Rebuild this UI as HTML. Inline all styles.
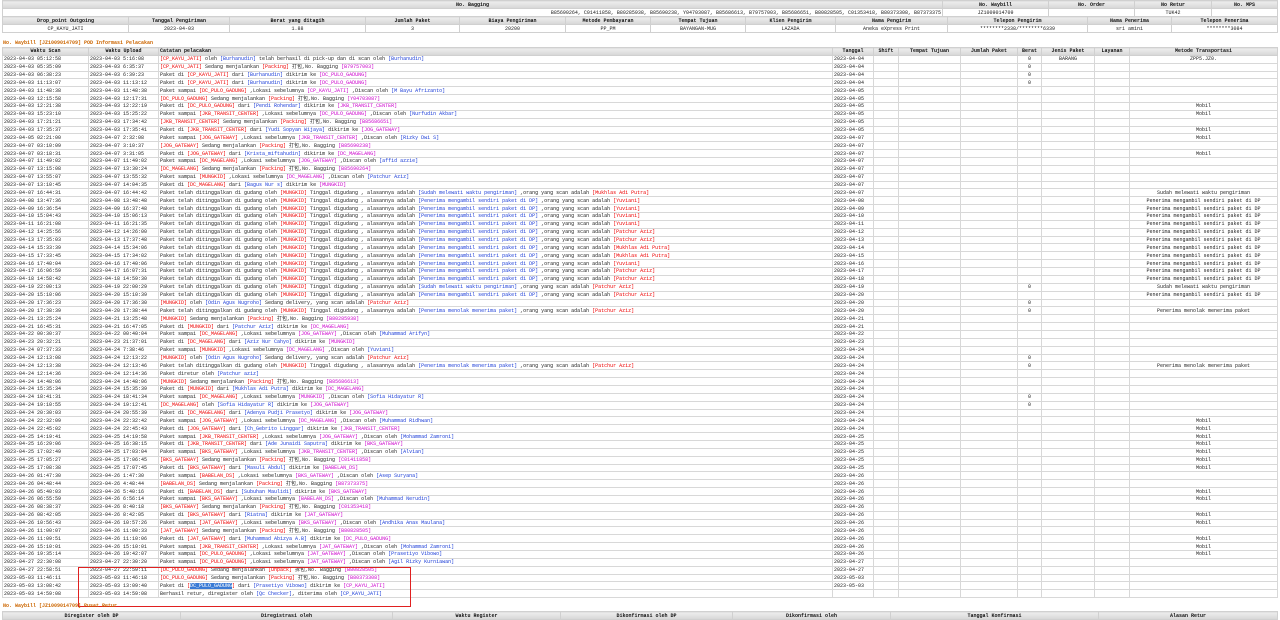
<!DOCTYPE html>
<html><head><meta charset="utf-8"><style>
*{box-sizing:border-box;margin:0;padding:0}
body{width:1280px;height:619px;overflow:hidden;background:#fff;font-family:"Liberation Mono","Noto Sans CJK SC",monospace;font-size:5px;color:#222}
table{border-collapse:collapse;table-layout:fixed;position:absolute;left:2px;width:1276px}
td,th{border:1px solid #d0d0d0;white-space:nowrap;overflow:hidden;padding:0 1px;line-height:6px}
th{background:linear-gradient(#eee,#d6d6d6);font-weight:bold;color:#111;text-align:center}
.c{text-align:center}
.r{color:#e00}.b{color:#1a3cd8}.m{color:#c0c}
.t{position:absolute;left:3px;color:#c60;font-weight:bold;font-size:5px}
#tr tr{height:7.86px}
#tr td{border-color:#d8d8d8}
.sel{background:#3a7bd5;color:#fff}
</style></head><body>
<table style="top:0"><colgroup><col style="width:940px"><col style="width:106px"><col style="width:86px"><col style="width:77px"><col></colgroup>
<tr style="height:8px"><th>No. Bagging</th><th>No. Waybill</th><th>No. Order</th><th>No Retur</th><th>No. MPS</th></tr>
<tr style="height:8px"><td style="text-align:right">B85690264, C01411858, B80285938, B85690238, Y04703087, B85686613, B79757003, B85686651, B80828505, C01353418, B80373308, B87373375</td><td class="c">JZ1009014709</td><td></td><td class="c">TUK42</td><td></td></tr></table>
<table style="top:16px"><colgroup><col style="width:126px"><col style="width:101px"><col style="width:136px"><col style="width:94px"><col style="width:106px"><col style="width:85px"><col style="width:95px"><col style="width:90px"><col style="width:112px"><col style="width:140px"><col style="width:84px"><col></colgroup>
<tr style="height:8px"><th>Drop_point Outgoing</th><th>Tanggal Pengiriman</th><th>Berat yang ditagih</th><th>Jumlah Paket</th><th>Biaya Pengiriman</th><th>Metode Pembayaran</th><th>Tempat Tujuan</th><th>Klien Pengirim</th><th>Nama Pengirim</th><th>Telepon Pengirim</th><th>Nama Penerima</th><th>Telepon Penerima</th></tr>
<tr style="height:8px" class="c"><td>CP_KAYU_JATI</td><td>2023-04-03</td><td>1.88</td><td>3</td><td>20200</td><td>PP_PM</td><td>BAYANGAN-MUG</td><td>LAZADA</td><td>Aneka eXpress Print</td><td>********2338/********6339</td><td>sri amini</td><td>********3084</td></tr></table>
<div class="t" style="top:40px">No. Waybill [JZ1009014709] POD Informasi Pelacakan</div>
<table id="tr" style="top:47px"><colgroup><col style="width:86px"><col style="width:70px"><col style="width:674px"><col style="width:41px"><col style="width:25px"><col style="width:62px"><col style="width:57px"><col style="width:24px"><col style="width:53px"><col style="width:35px"><col></colgroup>
<tr><th>Waktu Scan</th><th>Waktu Upload</th><th style="text-align:left">Catatan pelacakan</th><th>Tanggal</th><th>Shift</th><th>Tempat Tujuan</th><th>Jumlah Paket</th><th>Berat</th><th>Jenis Paket</th><th>Layanan</th><th>Metode Transportasi</th></tr>
<tr><td>2023-04-03 05:12:58</td><td>2023-04-03 5:16:08</td><td><span class="r">[CP_KAYU_JATI]</span> oleh <span class="b">[Burhanudin]</span> telah berhasil di pick-up dan di scan oleh <span class="b">[Burhanudin]</span></td><td>2023-04-04</td><td></td><td></td><td></td><td class="c">0</td><td class="c">BARANG</td><td></td><td class="c">ZPP5.JZ0.</td></tr>
<tr><td>2023-04-03 05:35:09</td><td>2023-04-03 6:35:37</td><td><span class="r">[CP_KAYU_JATI]</span> Sedang menjalankan <span class="r">[Packing]</span> 打包,No. Bagging <span class="m">[B79757003]</span></td><td>2023-04-04</td><td></td><td></td><td></td><td class="c">0</td><td></td><td></td><td></td></tr>
<tr><td>2023-04-03 06:38:23</td><td>2023-04-03 6:39:23</td><td>Paket di <span class="r">[CP_KAYU_JATI]</span> dari <span class="b">[Burhanudin]</span> dikirim ke <span class="m">[DC_PULO_GADUNG]</span></td><td>2023-04-04</td><td></td><td></td><td></td><td class="c">0</td><td></td><td></td><td></td></tr>
<tr><td>2023-04-03 11:13:07</td><td>2023-04-03 11:13:12</td><td>Paket di <span class="r">[CP_KAYU_JATI]</span> dari <span class="b">[Burhanudin]</span> dikirim ke <span class="m">[DC_PULO_GADUNG]</span></td><td>2023-04-04</td><td></td><td></td><td></td><td class="c">0</td><td></td><td></td><td></td></tr>
<tr><td>2023-04-03 11:48:38</td><td>2023-04-03 11:48:38</td><td>Paket sampai <span class="r">[DC_PULO_GADUNG]</span> ,Lokasi sebelumnya <span class="m">[CP_KAYU_JATI]</span> ,Discan oleh <span class="b">[M Bayu Afrizanto]</span></td><td>2023-04-05</td><td></td><td></td><td></td><td></td><td></td><td></td><td></td></tr>
<tr><td>2023-04-03 12:15:58</td><td>2023-04-03 12:17:31</td><td><span class="r">[DC_PULO_GADUNG]</span> Sedang menjalankan <span class="r">[Packing]</span> 打包,No. Bagging <span class="m">[Y04703087]</span></td><td>2023-04-05</td><td></td><td></td><td></td><td></td><td></td><td></td><td></td></tr>
<tr><td>2023-04-03 12:21:38</td><td>2023-04-03 12:22:19</td><td>Paket di <span class="r">[DC_PULO_GADUNG]</span> dari <span class="b">[Pendi Rohendar]</span> dikirim ke <span class="m">[JKB_TRANSIT_CENTER]</span></td><td>2023-04-05</td><td></td><td></td><td></td><td></td><td></td><td></td><td class="c">Mobil</td></tr>
<tr><td>2023-04-03 15:23:10</td><td>2023-04-03 15:25:22</td><td>Paket sampai <span class="r">[JKB_TRANSIT_CENTER]</span> ,Lokasi sebelumnya <span class="m">[DC_PULO_GADUNG]</span> ,Discan oleh <span class="b">[Nurfudin Akbar]</span></td><td>2023-04-05</td><td></td><td></td><td></td><td></td><td></td><td></td><td class="c">Mobil</td></tr>
<tr><td>2023-04-03 17:21:21</td><td>2023-04-03 17:34:42</td><td><span class="r">[JKB_TRANSIT_CENTER]</span> Sedang menjalankan <span class="r">[Packing]</span> 打包,No. Bagging <span class="m">[B85686651]</span></td><td>2023-04-05</td><td></td><td></td><td></td><td></td><td></td><td></td><td></td></tr>
<tr><td>2023-04-03 17:35:37</td><td>2023-04-03 17:35:41</td><td>Paket di <span class="r">[JKB_TRANSIT_CENTER]</span> dari <span class="b">[Yudi Sopyan Wijaya]</span> dikirim ke <span class="m">[JOG_GATEWAY]</span></td><td>2023-04-05</td><td></td><td></td><td></td><td></td><td></td><td></td><td class="c">Mobil</td></tr>
<tr><td>2023-04-05 02:21:00</td><td>2023-04-07 2:32:08</td><td>Paket sampai <span class="r">[JOG_GATEWAY]</span> ,Lokasi sebelumnya <span class="m">[JKB_TRANSIT_CENTER]</span> ,Discan oleh <span class="b">[Rizky Dwi S]</span></td><td>2023-04-07</td><td></td><td></td><td></td><td></td><td></td><td></td><td class="c">Mobil</td></tr>
<tr><td>2023-04-07 03:10:09</td><td>2023-04-07 3:10:37</td><td><span class="r">[JOG_GATEWAY]</span> Sedang menjalankan <span class="r">[Packing]</span> 打包,No. Bagging <span class="m">[B85690238]</span></td><td>2023-04-07</td><td></td><td></td><td></td><td></td><td></td><td></td><td></td></tr>
<tr><td>2023-04-07 03:18:31</td><td>2023-04-07 3:31:05</td><td>Paket di <span class="r">[JOG_GATEWAY]</span> dari <span class="b">[Krista_miftahudin]</span> dikirim ke <span class="m">[DC_MAGELANG]</span></td><td>2023-04-07</td><td></td><td></td><td></td><td></td><td></td><td></td><td class="c">Mobil</td></tr>
<tr><td>2023-04-07 11:49:02</td><td>2023-04-07 11:49:02</td><td>Paket sampai <span class="r">[DC_MAGELANG]</span> ,Lokasi sebelumnya <span class="m">[JOG_GATEWAY]</span> ,Discan oleh <span class="b">[affid azzie]</span></td><td>2023-04-07</td><td></td><td></td><td></td><td></td><td></td><td></td><td></td></tr>
<tr><td>2023-04-07 13:15:08</td><td>2023-04-07 13:30:24</td><td><span class="r">[DC_MAGELANG]</span> Sedang menjalankan <span class="r">[Packing]</span> 打包,No. Bagging <span class="m">[B85690264]</span></td><td>2023-04-07</td><td></td><td></td><td></td><td></td><td></td><td></td><td></td></tr>
<tr><td>2023-04-07 13:55:07</td><td>2023-04-07 13:55:32</td><td>Paket sampai <span class="r">[MUNGKID]</span> ,Lokasi sebelumnya <span class="m">[DC_MAGELANG]</span> ,Discan oleh <span class="b">[Patchur Aziz]</span></td><td>2023-04-07</td><td></td><td></td><td></td><td></td><td></td><td></td><td></td></tr>
<tr><td>2023-04-07 13:10:45</td><td>2023-04-07 14:04:35</td><td>Paket di <span class="r">[DC_MAGELANG]</span> dari <span class="b">[Bagus Nur s]</span> dikirim ke <span class="m">[MUNGKID]</span></td><td>2023-04-07</td><td></td><td></td><td></td><td></td><td></td><td></td><td></td></tr>
<tr><td>2023-04-07 16:44:31</td><td>2023-04-07 16:44:42</td><td>Paket telah ditinggalkan di gudang oleh <span class="r">[MUNGKID]</span> Tinggal digudang , alasannya adalah <span class="b">[Sudah melewati waktu pengiriman]</span> ,orang yang scan adalah <span class="r">[Mukhlas Adi Putra]</span></td><td>2023-04-07</td><td></td><td></td><td></td><td></td><td></td><td></td><td class="c">Sudah melewati waktu pengiriman</td></tr>
<tr><td>2023-04-08 13:47:36</td><td>2023-04-08 13:48:48</td><td>Paket telah ditinggalkan di gudang oleh <span class="r">[MUNGKID]</span> Tinggal digudang , alasannya adalah <span class="b">[Penerima mengambil sendiri paket di DP]</span> ,orang yang scan adalah <span class="r">[Yuviani]</span></td><td>2023-04-08</td><td></td><td></td><td></td><td></td><td></td><td></td><td class="c">Penerima mengambil sendiri paket di DP</td></tr>
<tr><td>2023-04-09 16:36:54</td><td>2023-04-09 16:37:48</td><td>Paket telah ditinggalkan di gudang oleh <span class="r">[MUNGKID]</span> Tinggal digudang , alasannya adalah <span class="b">[Penerima mengambil sendiri paket di DP]</span> ,orang yang scan adalah <span class="r">[Yuviani]</span></td><td>2023-04-09</td><td></td><td></td><td></td><td></td><td></td><td></td><td class="c">Penerima mengambil sendiri paket di DP</td></tr>
<tr><td>2023-04-10 15:04:43</td><td>2023-04-10 15:06:13</td><td>Paket telah ditinggalkan di gudang oleh <span class="r">[MUNGKID]</span> Tinggal digudang , alasannya adalah <span class="b">[Penerima mengambil sendiri paket di DP]</span> ,orang yang scan adalah <span class="r">[Yuviani]</span></td><td>2023-04-10</td><td></td><td></td><td></td><td></td><td></td><td></td><td class="c">Penerima mengambil sendiri paket di DP</td></tr>
<tr><td>2023-04-11 16:21:08</td><td>2023-04-11 16:21:35</td><td>Paket telah ditinggalkan di gudang oleh <span class="r">[MUNGKID]</span> Tinggal digudang , alasannya adalah <span class="b">[Penerima mengambil sendiri paket di DP]</span> ,orang yang scan adalah <span class="r">[Yuviani]</span></td><td>2023-04-11</td><td></td><td></td><td></td><td></td><td></td><td></td><td class="c">Penerima mengambil sendiri paket di DP</td></tr>
<tr><td>2023-04-12 14:25:56</td><td>2023-04-12 14:26:00</td><td>Paket telah ditinggalkan di gudang oleh <span class="r">[MUNGKID]</span> Tinggal digudang , alasannya adalah <span class="b">[Penerima mengambil sendiri paket di DP]</span> ,orang yang scan adalah <span class="r">[Patchur Aziz]</span></td><td>2023-04-12</td><td></td><td></td><td></td><td></td><td></td><td></td><td class="c">Penerima mengambil sendiri paket di DP</td></tr>
<tr><td>2023-04-13 17:35:03</td><td>2023-04-13 17:37:48</td><td>Paket telah ditinggalkan di gudang oleh <span class="r">[MUNGKID]</span> Tinggal digudang , alasannya adalah <span class="b">[Penerima mengambil sendiri paket di DP]</span> ,orang yang scan adalah <span class="r">[Patchur Aziz]</span></td><td>2023-04-13</td><td></td><td></td><td></td><td></td><td></td><td></td><td class="c">Penerima mengambil sendiri paket di DP</td></tr>
<tr><td>2023-04-14 15:33:39</td><td>2023-04-14 15:34:06</td><td>Paket telah ditinggalkan di gudang oleh <span class="r">[MUNGKID]</span> Tinggal digudang , alasannya adalah <span class="b">[Penerima mengambil sendiri paket di DP]</span> ,orang yang scan adalah <span class="r">[Mukhlas Adi Putra]</span></td><td>2023-04-14</td><td></td><td></td><td></td><td></td><td></td><td></td><td class="c">Penerima mengambil sendiri paket di DP</td></tr>
<tr><td>2023-04-15 17:33:45</td><td>2023-04-15 17:34:02</td><td>Paket telah ditinggalkan di gudang oleh <span class="r">[MUNGKID]</span> Tinggal digudang , alasannya adalah <span class="b">[Penerima mengambil sendiri paket di DP]</span> ,orang yang scan adalah <span class="r">[Mukhlas Adi Putra]</span></td><td>2023-04-15</td><td></td><td></td><td></td><td></td><td></td><td></td><td class="c">Penerima mengambil sendiri paket di DP</td></tr>
<tr><td>2023-04-16 17:40:04</td><td>2023-04-16 17:40:06</td><td>Paket telah ditinggalkan di gudang oleh <span class="r">[MUNGKID]</span> Tinggal digudang , alasannya adalah <span class="b">[Penerima mengambil sendiri paket di DP]</span> ,orang yang scan adalah <span class="r">[Yuviani]</span></td><td>2023-04-16</td><td></td><td></td><td></td><td></td><td></td><td></td><td class="c">Penerima mengambil sendiri paket di DP</td></tr>
<tr><td>2023-04-17 16:06:59</td><td>2023-04-17 16:07:31</td><td>Paket telah ditinggalkan di gudang oleh <span class="r">[MUNGKID]</span> Tinggal digudang , alasannya adalah <span class="b">[Penerima mengambil sendiri paket di DP]</span> ,orang yang scan adalah <span class="r">[Patchur Aziz]</span></td><td>2023-04-17</td><td></td><td></td><td></td><td></td><td></td><td></td><td class="c">Penerima mengambil sendiri paket di DP</td></tr>
<tr><td>2023-04-18 14:58:42</td><td>2023-04-18 14:59:30</td><td>Paket telah ditinggalkan di gudang oleh <span class="r">[MUNGKID]</span> Tinggal digudang , alasannya adalah <span class="b">[Penerima mengambil sendiri paket di DP]</span> ,orang yang scan adalah <span class="r">[Patchur Aziz]</span></td><td>2023-04-18</td><td></td><td></td><td></td><td></td><td></td><td></td><td class="c">Penerima mengambil sendiri paket di DP</td></tr>
<tr><td>2023-04-19 22:00:13</td><td>2023-04-19 22:00:29</td><td>Paket telah ditinggalkan di gudang oleh <span class="r">[MUNGKID]</span> Tinggal digudang , alasannya adalah <span class="b">[Sudah melewati waktu pengiriman]</span> ,orang yang scan adalah <span class="r">[Patchur Aziz]</span></td><td>2023-04-19</td><td></td><td></td><td></td><td class="c">0</td><td></td><td></td><td class="c">Sudah melewati waktu pengiriman</td></tr>
<tr><td>2023-04-20 15:10:06</td><td>2023-04-20 15:10:39</td><td>Paket telah ditinggalkan di gudang oleh <span class="r">[MUNGKID]</span> Tinggal digudang , alasannya adalah <span class="b">[Penerima mengambil sendiri paket di DP]</span> ,orang yang scan adalah <span class="r">[Patchur Aziz]</span></td><td>2023-04-20</td><td></td><td></td><td></td><td></td><td></td><td></td><td class="c">Penerima mengambil sendiri paket di DP</td></tr>
<tr><td>2023-04-20 17:36:23</td><td>2023-04-20 17:36:30</td><td><span class="r">[MUNGKID]</span> oleh <span class="b">[Odin Agus Nugroho]</span> Sedang delivery, yang scan adalah <span class="r">[Patchur Aziz]</span></td><td>2023-04-20</td><td></td><td></td><td></td><td class="c">0</td><td></td><td></td><td></td></tr>
<tr><td>2023-04-20 17:38:39</td><td>2023-04-20 17:38:44</td><td>Paket telah ditinggalkan di gudang oleh <span class="r">[MUNGKID]</span> Tinggal digudang , alasannya adalah <span class="b">[Penerima menolak menerima paket]</span> ,orang yang scan adalah <span class="r">[Patchur Aziz]</span></td><td>2023-04-20</td><td></td><td></td><td></td><td class="c">0</td><td></td><td></td><td class="c">Penerima menolak menerima paket</td></tr>
<tr><td>2023-04-21 13:25:24</td><td>2023-04-21 13:25:48</td><td><span class="r">[MUNGKID]</span> Sedang menjalankan <span class="r">[Packing]</span> 打包,No. Bagging <span class="m">[B80285938]</span></td><td>2023-04-21</td><td></td><td></td><td></td><td></td><td></td><td></td><td></td></tr>
<tr><td>2023-04-21 16:45:31</td><td>2023-04-21 16:47:05</td><td>Paket di <span class="r">[MUNGKID]</span> dari <span class="b">[Patchur Aziz]</span> dikirim ke <span class="m">[DC_MAGELANG]</span></td><td>2023-04-21</td><td></td><td></td><td></td><td></td><td></td><td></td><td></td></tr>
<tr><td>2023-04-22 00:30:37</td><td>2023-04-22 00:40:04</td><td>Paket sampai <span class="r">[DC_MAGELANG]</span> ,Lokasi sebelumnya <span class="m">[JOG_GATEWAY]</span> ,Discan oleh <span class="b">[Muhammad Arifyn]</span></td><td>2023-04-22</td><td></td><td></td><td></td><td></td><td></td><td></td><td></td></tr>
<tr><td>2023-04-23 20:32:21</td><td>2023-04-23 21:37:01</td><td>Paket di <span class="r">[DC_MAGELANG]</span> dari <span class="b">[Aziz Nur Cahyo]</span> dikirim ke <span class="m">[MUNGKID]</span></td><td>2023-04-23</td><td></td><td></td><td></td><td></td><td></td><td></td><td></td></tr>
<tr><td>2023-04-24 07:37:33</td><td>2023-04-24 7:38:46</td><td>Paket sampai <span class="r">[MUNGKID]</span> ,Lokasi sebelumnya <span class="m">[DC_MAGELANG]</span> ,Discan oleh <span class="b">[Yuviani]</span></td><td>2023-04-24</td><td></td><td></td><td></td><td></td><td></td><td></td><td></td></tr>
<tr><td>2023-04-24 12:13:08</td><td>2023-04-24 12:13:22</td><td><span class="r">[MUNGKID]</span> oleh <span class="b">[Odin Agus Nugroho]</span> Sedang delivery, yang scan adalah <span class="r">[Patchur Aziz]</span></td><td>2023-04-24</td><td></td><td></td><td></td><td class="c">0</td><td></td><td></td><td></td></tr>
<tr><td>2023-04-24 12:13:38</td><td>2023-04-24 12:13:46</td><td>Paket telah ditinggalkan di gudang oleh <span class="r">[MUNGKID]</span> Tinggal digudang , alasannya adalah <span class="b">[Penerima menolak menerima paket]</span> ,orang yang scan adalah <span class="r">[Patchur Aziz]</span></td><td>2023-04-24</td><td></td><td></td><td></td><td class="c">0</td><td></td><td></td><td class="c">Penerima menolak menerima paket</td></tr>
<tr><td>2023-04-24 12:14:36</td><td>2023-04-24 12:14:36</td><td>Paket diretur oleh <span class="b">[Patchur aziz]</span></td><td>2023-04-24</td><td></td><td></td><td></td><td></td><td></td><td></td><td></td></tr>
<tr><td>2023-04-24 14:48:06</td><td>2023-04-24 14:48:06</td><td><span class="r">[MUNGKID]</span> Sedang menjalankan <span class="r">[Packing]</span> 打包,No. Bagging <span class="m">[B85686613]</span></td><td>2023-04-24</td><td></td><td></td><td></td><td></td><td></td><td></td><td></td></tr>
<tr><td>2023-04-24 15:35:34</td><td>2023-04-24 15:35:39</td><td>Paket di <span class="r">[MUNGKID]</span> dari <span class="b">[Mukhlas Adi Putra]</span> dikirim ke <span class="m">[DC_MAGELANG]</span></td><td>2023-04-24</td><td></td><td></td><td></td><td></td><td></td><td></td><td></td></tr>
<tr><td>2023-04-24 18:41:31</td><td>2023-04-24 18:41:34</td><td>Paket sampai <span class="r">[DC_MAGELANG]</span> ,Lokasi sebelumnya <span class="m">[MUNGKID]</span> ,Discan oleh <span class="b">[Sofia Hidayatur R]</span></td><td>2023-04-24</td><td></td><td></td><td></td><td class="c">0</td><td></td><td></td><td></td></tr>
<tr><td>2023-04-24 19:10:55</td><td>2023-04-24 19:12:41</td><td><span class="r">[DC_MAGELANG]</span> oleh <span class="b">[Sofia Hidayatur R]</span> dikirim ke <span class="m">[JOG_GATEWAY]</span></td><td>2023-04-24</td><td></td><td></td><td></td><td class="c">0</td><td></td><td></td><td></td></tr>
<tr><td>2023-04-24 20:30:03</td><td>2023-04-24 20:55:39</td><td>Paket di <span class="r">[DC_MAGELANG]</span> dari <span class="b">[Adenya Pudji Prasetyo]</span> dikirim ke <span class="m">[JOG_GATEWAY]</span></td><td>2023-04-24</td><td></td><td></td><td></td><td></td><td></td><td></td><td></td></tr>
<tr><td>2023-04-24 22:32:09</td><td>2023-04-24 22:32:42</td><td>Paket sampai <span class="r">[JOG_GATEWAY]</span> ,Lokasi sebelumnya <span class="m">[DC_MAGELANG]</span> ,Discan oleh <span class="b">[Muhammad Ridhwan]</span></td><td>2023-04-24</td><td></td><td></td><td></td><td></td><td></td><td></td><td class="c">Mobil</td></tr>
<tr><td>2023-04-24 22:45:02</td><td>2023-04-24 22:45:43</td><td>Paket di <span class="r">[JOG_GATEWAY]</span> dari <span class="b">[Ch_Gebrito Linggar]</span> dikirim ke <span class="m">[JKB_TRANSIT_CENTER]</span></td><td>2023-04-24</td><td></td><td></td><td></td><td></td><td></td><td></td><td class="c">Mobil</td></tr>
<tr><td>2023-04-25 14:19:41</td><td>2023-04-25 14:19:58</td><td>Paket sampai <span class="r">[JKB_TRANSIT_CENTER]</span> ,Lokasi sebelumnya <span class="m">[JOG_GATEWAY]</span> ,Discan oleh <span class="b">[Mohammad Zamroni]</span></td><td>2023-04-25</td><td></td><td></td><td></td><td></td><td></td><td></td><td class="c">Mobil</td></tr>
<tr><td>2023-04-25 16:29:06</td><td>2023-04-25 16:38:15</td><td>Paket di <span class="r">[JKB_TRANSIT_CENTER]</span> dari <span class="b">[Ade Junaidi Saputra]</span> dikirim ke <span class="m">[BKS_GATEWAY]</span></td><td>2023-04-25</td><td></td><td></td><td></td><td></td><td></td><td></td><td class="c">Mobil</td></tr>
<tr><td>2023-04-25 17:02:49</td><td>2023-04-25 17:03:04</td><td>Paket sampai <span class="r">[BKS_GATEWAY]</span> ,Lokasi sebelumnya <span class="m">[JKB_TRANSIT_CENTER]</span> ,Discan oleh <span class="b">[Alvian]</span></td><td>2023-04-25</td><td></td><td></td><td></td><td></td><td></td><td></td><td class="c">Mobil</td></tr>
<tr><td>2023-04-25 17:05:27</td><td>2023-04-25 17:06:45</td><td><span class="r">[BKS_GATEWAY]</span> Sedang menjalankan <span class="r">[Packing]</span> 打包,No. Bagging <span class="m">[C01411858]</span></td><td>2023-04-25</td><td></td><td></td><td></td><td></td><td></td><td></td><td class="c">Mobil</td></tr>
<tr><td>2023-04-25 17:08:38</td><td>2023-04-25 17:07:45</td><td>Paket di <span class="r">[BKS_GATEWAY]</span> dari <span class="b">[Masuli Abdul]</span> dikirim ke <span class="m">[BABELAN_DS]</span></td><td>2023-04-25</td><td></td><td></td><td></td><td></td><td></td><td></td><td class="c">Mobil</td></tr>
<tr><td>2023-04-26 01:47:30</td><td>2023-04-26 1:47:30</td><td>Paket sampai <span class="r">[BABELAN_DS]</span> ,Lokasi sebelumnya <span class="m">[BKS_GATEWAY]</span> ,Discan oleh <span class="b">[Asep Suryana]</span></td><td>2023-04-26</td><td></td><td></td><td></td><td></td><td></td><td></td><td></td></tr>
<tr><td>2023-04-26 04:48:44</td><td>2023-04-26 4:48:44</td><td><span class="r">[BABELAN_DS]</span> Sedang menjalankan <span class="r">[Packing]</span> 打包,No. Bagging <span class="m">[B87373375]</span></td><td>2023-04-26</td><td></td><td></td><td></td><td></td><td></td><td></td><td></td></tr>
<tr><td>2023-04-26 05:40:03</td><td>2023-04-26 5:40:16</td><td>Paket di <span class="r">[BABELAN_DS]</span> dari <span class="b">[Subuhan Maulidi]</span> dikirim ke <span class="m">[BKS_GATEWAY]</span></td><td>2023-04-26</td><td></td><td></td><td></td><td></td><td></td><td></td><td class="c">Mobil</td></tr>
<tr><td>2023-04-26 06:55:59</td><td>2023-04-26 6:56:14</td><td>Paket sampai <span class="r">[BKS_GATEWAY]</span> ,Lokasi sebelumnya <span class="m">[BABELAN_DS]</span> ,Discan oleh <span class="b">[Muhammad Nerudin]</span></td><td>2023-04-26</td><td></td><td></td><td></td><td></td><td></td><td></td><td class="c">Mobil</td></tr>
<tr><td>2023-04-26 08:38:37</td><td>2023-04-26 8:40:18</td><td><span class="r">[BKS_GATEWAY]</span> Sedang menjalankan <span class="r">[Packing]</span> 打包,No. Bagging <span class="m">[C01353418]</span></td><td>2023-04-26</td><td></td><td></td><td></td><td></td><td></td><td></td><td></td></tr>
<tr><td>2023-04-26 08:42:05</td><td>2023-04-26 8:42:05</td><td>Paket di <span class="r">[BKS_GATEWAY]</span> dari <span class="b">[Riatna]</span> dikirim ke <span class="m">[JAT_GATEWAY]</span></td><td>2023-04-26</td><td></td><td></td><td></td><td></td><td></td><td></td><td class="c">Mobil</td></tr>
<tr><td>2023-04-26 10:56:43</td><td>2023-04-26 10:57:26</td><td>Paket sampai <span class="r">[JAT_GATEWAY]</span> ,Lokasi sebelumnya <span class="m">[BKS_GATEWAY]</span> ,Discan oleh <span class="b">[Andhika Anas Maulana]</span></td><td>2023-04-26</td><td></td><td></td><td></td><td></td><td></td><td></td><td class="c">Mobil</td></tr>
<tr><td>2023-04-26 11:00:07</td><td>2023-04-26 11:00:33</td><td><span class="r">[JAT_GATEWAY]</span> Sedang menjalankan <span class="r">[Packing]</span> 打包,No. Bagging <span class="m">[B80828505]</span></td><td>2023-04-26</td><td></td><td></td><td></td><td></td><td></td><td></td><td></td></tr>
<tr><td>2023-04-26 11:09:51</td><td>2023-04-26 11:10:06</td><td>Paket di <span class="r">[JAT_GATEWAY]</span> dari <span class="b">[Muhammad Abizya A.B]</span> dikirim ke <span class="m">[DC_PULO_GADUNG]</span></td><td>2023-04-26</td><td></td><td></td><td></td><td></td><td></td><td></td><td class="c">Mobil</td></tr>
<tr><td>2023-04-26 15:10:01</td><td>2023-04-26 15:10:01</td><td>Paket sampai <span class="r">[JKB_TRANSIT_CENTER]</span> ,Lokasi sebelumnya <span class="m">[JAT_GATEWAY]</span> ,Discan oleh <span class="b">[Mohammad Zamroni]</span></td><td>2023-04-26</td><td></td><td></td><td></td><td></td><td></td><td></td><td class="c">Mobil</td></tr>
<tr><td>2023-04-26 19:35:14</td><td>2023-04-26 19:42:07</td><td>Paket sampai <span class="r">[DC_PULO_GADUNG]</span> ,Lokasi sebelumnya <span class="m">[JAT_GATEWAY]</span> ,Discan oleh <span class="b">[Prasetiyo Vibowo]</span></td><td>2023-04-26</td><td></td><td></td><td></td><td></td><td></td><td></td><td class="c">Mobil</td></tr>
<tr><td>2023-04-27 22:30:08</td><td>2023-04-27 22:30:20</td><td>Paket sampai <span class="r">[DC_PULO_GADUNG]</span> ,Lokasi sebelumnya <span class="m">[JAT_GATEWAY]</span> ,Discan oleh <span class="b">[Agil Rizky Kurniawan]</span></td><td>2023-04-27</td><td></td><td></td><td></td><td></td><td></td><td></td><td></td></tr>
<tr><td>2023-04-27 22:58:51</td><td>2023-04-27 22:59:11</td><td><span class="r">[DC_PULO_GADUNG]</span> Sedang menjalankan <span class="r">[Unpack]</span> 拆包,No. Bagging <span class="m">[B80828505]</span></td><td>2023-04-27</td><td></td><td></td><td></td><td></td><td></td><td></td><td></td></tr>
<tr><td>2023-05-03 11:46:11</td><td>2023-05-03 11:46:18</td><td><span class="r">[DC_PULO_GADUNG]</span> Sedang menjalankan <span class="r">[Packing]</span> 打包,No. Bagging <span class="m">[B80373308]</span></td><td>2023-05-03</td><td></td><td></td><td></td><td></td><td></td><td></td><td></td></tr>
<tr><td>2023-05-03 13:08:42</td><td>2023-05-03 13:09:40</td><td>Paket di <span class="r">[<span class="sel">DC_PULO_GADUNG</span>]</span> dari <span class="b">[Prasetiyo Vibowo]</span> dikirim ke <span class="m">[CP_KAYU_JATI]</span></td><td>2023-05-03</td><td></td><td></td><td></td><td></td><td></td><td></td><td></td></tr>
<tr><td>2023-05-03 14:59:08</td><td>2023-05-03 14:59:08</td><td>Berhasil retur, diregister oleh <span class="b">[Qc Checker]</span>, diterima oleh <span class="b">[CP_KAYU_JATI]</span></td><td></td><td></td><td></td><td></td><td></td><td></td><td></td><td></td></tr>
</table>
<div style="position:absolute;left:78px;top:567px;width:333px;height:40px;border:1.5px solid #e02020"></div>
<div class="t" style="top:603px">No. Waybill [JZ1009014709] Pusat Retur</div>
<table style="top:611px"><colgroup><col style="width:178px"><col style="width:212px"><col style="width:168px"><col style="width:172px"><col style="width:158px"><col style="width:208px"><col></colgroup>
<tr style="height:8px"><th>Diregister oleh DP</th><th>Diregistrasi oleh</th><th>Waktu Register</th><th>Dikonfirmasi oleh DP</th><th>Dikonfirmasi oleh</th><th>Tanggal Konfirmasi</th><th>Alasan Retur</th></tr></table>
</body></html>
